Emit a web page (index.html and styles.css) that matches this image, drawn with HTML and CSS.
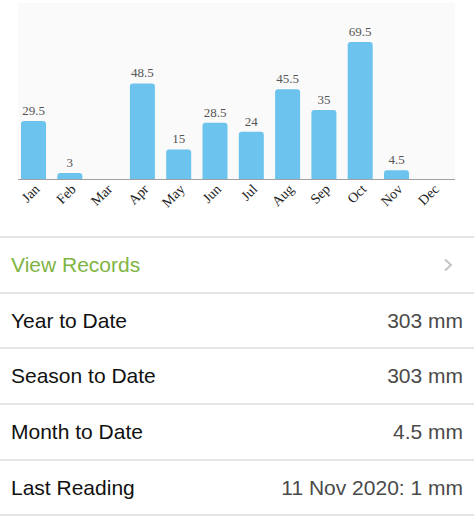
FILE: index.html
```html
<html>

<head>
    <meta charset="utf-8">
    <link rel="stylesheet" href="styles.css">
</head>

<body>
    <div class="chart">
        <svg id="rain" width="474" height="236" viewBox="0 0 474 236">
            <rect class="plot" x="18" y="3" width="437" height="176" />
            <g id="bars"></g>
            <line class="axis" x1="18" y1="179.5" x2="455" y2="179.5" />
        </svg>
    </div>

    <div class="list">
        <div class="row link">
            <span class="label">View Records</span>
            <svg class="chevron" width="10" height="14" viewBox="0 0 10 14">
                <polyline points="2,1.5 8,7 2,12.5" />
            </svg>
        </div>
        <div class="row">
            <span class="label">Year to Date</span>
            <span class="value">303 mm</span>
        </div>
        <div class="row">
            <span class="label">Season to Date</span>
            <span class="value">303 mm</span>
        </div>
        <div class="row">
            <span class="label">Month to Date</span>
            <span class="value">4.5 mm</span>
        </div>
        <div class="row">
            <span class="label">Last Reading</span>
            <span class="value">11 Nov 2020: 1 mm</span>
        </div>
    </div>

    <script>
        var months = ['Jan', 'Feb', 'Mar', 'Apr', 'May', 'Jun', 'Jul', 'Aug', 'Sep', 'Oct', 'Nov', 'Dec'];
        var rain = [29.5, 3, 0, 48.5, 15, 28.5, 24, 45.5, 35, 69.5, 4.5, 0];

        var ns = 'http://www.w3.org/2000/svg';
        var base = 179;
        var scale = 1.97;
        var barWidth = 25;
        var r = 3;

        function make(tag, attrs, text) {
            var el = document.createElementNS(ns, tag);
            for (var k in attrs) {
                el.setAttribute(k, attrs[k]);
            }
            if (text !== undefined) {
                el.textContent = text;
            }
            return el;
        }

        var group = document.getElementById('bars');

        for (var i = 0; i < months.length; i++) {
            var x = 21 + i * 36.3;
            var cx = x + barWidth / 2;

            if (rain[i] > 0) {
                var barTop = base - rain[i] * scale;
                var d = 'M' + x + ',' + base +
                    ' V' + (barTop + r) +
                    ' Q' + x + ',' + barTop + ' ' + (x + r) + ',' + barTop +
                    ' H' + (x + barWidth - r) +
                    ' Q' + (x + barWidth) + ',' + barTop + ' ' + (x + barWidth) + ',' + (barTop + r) +
                    ' V' + base + ' Z';
                group.appendChild(make('path', { d: d, 'class': 'bar' }));
                group.appendChild(make('text', { x: cx, y: barTop - 6, 'class': 'amount' }, rain[i]));
            }

            var lx = cx + 7;
            var ly = 190;
            group.appendChild(make('text', {
                x: lx,
                y: ly,
                'class': 'month',
                transform: 'rotate(-45 ' + lx + ' ' + ly + ')'
            }, months[i]));
        }
    </script>
</body>

</html>
```

FILE: styles.css
```css
body {
    margin: 0;
    background-color: #ffffff;
    font-family: 'Liberation Sans', Arial, sans-serif;
}

.chart {
    height: 236px;
    border-bottom: solid #e4e4e4 2px;
}

.chart svg {
    display: block;
}

.plot {
    fill: #fafafa;
}

.axis {
    stroke: #a0a0a0;
    stroke-width: 1;
}

.bar {
    fill: #6cc3ed;
}

.amount {
    font-family: 'Liberation Serif', serif;
    font-size: 13px;
    fill: #555555;
    text-anchor: middle;
}

.month {
    font-family: 'Liberation Serif', serif;
    font-size: 14px;
    fill: #222222;
    text-anchor: end;
}

.row {
    height: 53.7px;
    padding: 0 11px;
    display: flex;
    align-items: center;
    justify-content: space-between;
    border-bottom: solid #e6e6e6 2px;
    font-size: 21px;
}

.label {
    color: #111111;
}

.value {
    color: #4a4a4a;
}

.link .label {
    color: #80b543;
}

.chevron {
    margin-right: 10px;
}

.chevron polyline {
    fill: none;
    stroke: #c4c4c7;
    stroke-width: 2;
}
```
